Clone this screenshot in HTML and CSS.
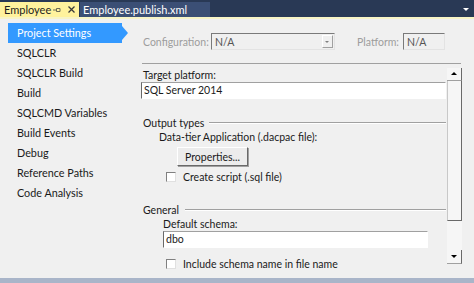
FILE: index.html
```html
<!DOCTYPE html>
<html lang="en">
<head>
  <meta charset="UTF-8">
  <title>Employee</title>
  <link rel="stylesheet" href="styles.css">
</head>
<body>

  <!-- document tabs -->
  <div class="tabbar">
    <div class="tab active">
      <span class="tab-title">Employee</span>
      <svg class="pin" width="8" height="6" viewBox="0 0 8 6">
        <path d="M0 3h3M3.5 1.5h3.5v3h-3.5z" stroke="#6b6a55" fill="none"/>
      </svg>
      <svg class="close" width="7" height="7" viewBox="0 0 7 7">
        <path d="M0.5 0.5l6 6M6.5 0.5l-6 6" stroke="#3a3a3a" stroke-width="1.3"/>
      </svg>
    </div>
    <div class="tab">Employee.publish.xml</div>
    <span class="tab-menu"></span>
  </div>
  <div class="tabline"></div>

  <div class="main">
    <ul class="nav">
      <li class="selected">Project Settings</li>
      <li>SQLCLR</li>
      <li>SQLCLR Build</li>
      <li>Build</li>
      <li>SQLCMD Variables</li>
      <li>Build Events</li>
      <li>Debug</li>
      <li>Reference Paths</li>
      <li>Code Analysis</li>
    </ul>

    <div class="page">
      <div class="config-row">
        <span class="muted config-label">Configuration:</span>
        <div class="combo"><span>N/A</span><span class="combo-btn"></span></div>
        <span class="muted platform-label">Platform:</span>
        <div class="combo small"><span>N/A</span></div>
      </div>
      <div class="sep"></div>

      <div class="scroll-area">
        <div class="content">
          <div class="label target-label">Target platform:</div>
          <div class="field">SQL Server 2014</div>

          <div class="group-head output-head"><span>Output types</span><i></i></div>
          <div class="label dacpac">Data-tier Application (.dacpac file):</div>
          <button class="btn">Properties...</button>
          <div class="check-row"><span class="box"></span>Create script (.sql file)</div>

          <div class="group-head general-head"><span>General</span><i></i></div>
          <div class="label schema-label">Default schema:</div>
          <div class="field schema">dbo</div>
          <div class="check-row last"><span class="box"></span>Include schema name in file name</div>
        </div>

        <div class="scrollbar">
          <div class="sb-btn up"></div>
          <div class="sb-thumb"></div>
          <div class="sb-track"></div>
          <div class="sb-btn down"></div>
        </div>
      </div>
    </div>
  </div>

  <div class="statusbar"></div>

</body>
</html>
```

FILE: styles.css
```css
body {
  margin: 0;
  width: 474px;
  height: 283px;
  overflow: hidden;
  background: #f0f0f0;
  font-family: Lato, "Open Sans", sans-serif;
  font-size: 10.5px;
  color: #1a1a1a;
}
.tabbar {
  height: 17px;
  background: #293955;
  display: flex;
  align-items: flex-end;
  position: relative;
}
.tab {
  flex: none;
  box-sizing: border-box;
  height: 15px;
  line-height: 15px;
  padding: 0 3px;
  margin-right: 1px;
  background: #3b4f75;
  color: #fff;
  font-size: 11px;
  width: 130px;
}
.tab.active {
  width: 79px;
  padding-left: 4px;
  background: #fff29d;
  color: #1e1e1e;
  display: flex;
  align-items: center;
}
.tab-title {
  width: 49px;
}
.pin {
  margin-right: 7px;
}
.tab-menu {
  position: absolute;
  right: 5px;
  top: 8px;
  border-left: 3px solid transparent;
  border-right: 3px solid transparent;
  border-top: 3px solid #fff;
}
.tabline {
  height: 2px;
  background: #f7f4c6;
}
.main {
  display: flex;
  height: 259px;
}
.nav {
  list-style: none;
  margin: 0;
  padding: 4px 0 0 0;
  width: 141px;
  font-size: 10.8px;
}
.nav li {
  height: 20px;
  line-height: 20px;
  padding-left: 17px;
}
.nav li.selected {
  position: relative;
  margin-left: 8px;
  width: 105px;
  padding-left: 9px;
  background: #3399ff;
  color: #fff;
}
.nav li.selected::after {
  content: "";
  position: absolute;
  right: -6px;
  top: 3px;
  border-top: 7px solid transparent;
  border-bottom: 7px solid transparent;
  border-left: 6px solid #3399ff;
}
.page {
  width: 333px;
}
.config-row {
  display: flex;
  align-items: center;
  margin-top: 14px;
  height: 17px;
}
.muted {
  color: #9d9d9d;
}
.config-label {
  width: 68px;
  padding-left: 2px;
}
.platform-label {
  width: 46px;
  margin-left: 22px;
}
.combo {
  box-sizing: border-box;
  width: 124px;
  height: 17px;
  border: 1px solid;
  border-color: #7a7a7a #e3e3e3 #e3e3e3 #7a7a7a;
  display: flex;
  align-items: center;
  padding-left: 3px;
  color: #555;
}
.combo span:first-child {
  flex: 1;
}
.combo.small {
  width: 42px;
}
.combo-btn {
  width: 11px;
  height: 13px;
  margin-right: 1px;
  box-sizing: border-box;
  border: 1px solid;
  border-color: #fff #a0a0a0 #a0a0a0 #fff;
  position: relative;
}
.combo-btn::after {
  content: "";
  position: absolute;
  left: 2px;
  top: 5px;
  border-left: 2px solid transparent;
  border-right: 2px solid transparent;
  border-top: 2px solid #808080;
}
.sep {
  margin-top: 13px;
  margin-left: 1px;
  width: 319px;
  height: 1px;
  background: #a0a0a0;
}
.scroll-area {
  display: flex;
  height: 214px;
}
.content {
  width: 305px;
}
.label {
  height: 14px;
  line-height: 14px;
  padding-left: 2px;
}
.target-label {
  margin-top: 4px;
}
.dacpac {
  padding-left: 18px;
}
.schema-label {
  padding-left: 22px;
}
.field {
  box-sizing: border-box;
  height: 17px;
  line-height: 15px;
  background: #fff;
  border: 1px solid;
  border-color: #a0a0a0 #fff #fff #696969;
  padding-left: 2px;
}
.field.schema {
  margin-left: 22px;
  width: 265px;
}
.group-head {
  display: flex;
  align-items: center;
  height: 14px;
  padding-left: 2px;
}
.group-head i {
  flex: 1;
  height: 1px;
  margin-left: 6px;
  background: #a0a0a0;
  border-bottom: 1px solid #fff;
}
.output-head {
  margin-top: 17px;
}
.output-head i {
  margin-left: 5px;
}
.general-head {
  margin-top: 19px;
}
.btn {
  display: block;
  margin: 3px 0 0 36px;
  width: 71px;
  height: 19px;
  padding: 0;
  font: inherit;
  color: #1a1a1a;
  background: #ececec;
  border: 1px solid;
  border-color: #fff #696969 #696969 #fff;
  box-shadow: 1px 1px 0 #a0a0a0;
}
.check-row {
  display: flex;
  align-items: center;
  height: 14px;
  margin-top: 4px;
  padding-left: 25px;
}
.check-row.last {
  margin-top: 9px;
}
.box {
  box-sizing: border-box;
  width: 10px;
  height: 10px;
  background: #fff;
  border: 1px solid;
  border-color: #808080 #e0e0e0 #e0e0e0 #808080;
  margin-right: 7px;
}
.scrollbar {
  margin-left: 1px;
  margin-top: 4px;
  width: 15px;
  height: 196px;
  background: #f6f6f6;
  display: flex;
  flex-direction: column;
}
.sb-btn {
  box-sizing: border-box;
  height: 13px;
  border-right: 1px solid #696969;
  border-bottom: 1px solid #a0a0a0;
  position: relative;
}
.sb-btn.down {
  height: 14px;
}
.sb-btn::after {
  content: "";
  position: absolute;
  left: 4px;
  top: 5px;
  border-left: 3px solid transparent;
  border-right: 3px solid transparent;
}
.sb-btn.up::after {
  top: 4px;
  border-bottom: 3px solid #000;
}
.sb-btn.down::after {
  border-top: 3px solid #000;
}
.sb-thumb {
  box-sizing: border-box;
  height: 140px;
  border-left: 1px solid #c8c8c8;
  border-right: 1px solid #696969;
  border-bottom: 1px solid #696969;
}
.sb-track {
  flex: 1;
}
.statusbar {
  height: 5px;
  background: #a9b5c9;
}
```
